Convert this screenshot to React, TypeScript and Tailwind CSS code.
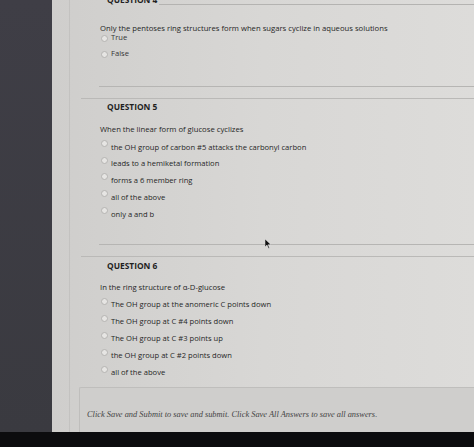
import React from "react";

function Radio() {
  return (
    <span className="w-[7px] h-[7px] rounded-full border border-[#b5b4b2] bg-[#e6e5e3] shrink-0 -translate-y-[4px] mr-[3px]" />
  );
}

function Option({ text, h = "h-[17px]" }: { text: string; h?: string }) {
  return (
    <div className={h + " flex items-center pl-[31px]"}>
      <Radio />
      <span className="block text-[7.6px] leading-none text-[#262626] whitespace-nowrap">{text}</span>
    </div>
  );
}

function Heading({ text, className = "" }: { text: string; className?: string }) {
  return (
    <div className={"h-[12px] flex items-center pl-[37px] " + className}>
      <span className="block text-[8.4px] font-bold leading-none text-[#1f1f1f] whitespace-nowrap">{text}</span>
    </div>
  );
}

function Stem({ text, className = "" }: { text: string; className?: string }) {
  return (
    <div className={"h-[10px] flex items-center pl-[30px] " + className}>
      <span className="block text-[7.7px] leading-none text-[#262626] whitespace-nowrap">{text}</span>
    </div>
  );
}

function Separator({ first, second }: { first: string; second: string }) {
  return (
    <>
      <div className={"h-px bg-[#b6b5b3] ml-[29px] " + first} />
      <div className={"h-px bg-[#bab9b7] ml-[11px] " + second} />
    </>
  );
}

export default function App() {
  return (
    <div className="w-[474px] h-[447px] overflow-hidden flex flex-col bg-[#0c0c0e] font-['Open_Sans',sans-serif] relative">
      <div className="flex h-[432px]">
        <div className="w-[52px] bg-gradient-to-b from-[#3f3e46] to-[#3a3a40]" />
        <div className="flex-1 flex bg-gradient-to-r from-[#cfcecc] via-[#d8d7d5] to-[#dddcda]">
          <div className="w-[18px] border-r border-[#c3c2c0]" />
          <div className="flex-1 flex flex-col">
            {/* Question 4 */}
            <div className="h-[12px] -mt-[6px] flex items-center pl-[37px]">
              <span className="block text-[8.4px] font-bold leading-none text-[#1f1f1f] whitespace-nowrap">QUESTION 4</span>
              <div className="flex-1 h-px bg-[#b4b3b1] ml-[2px] translate-y-[4px]" />
            </div>
            <Stem className="mt-[18px]" text="Only the pentoses ring structures form when sugars cyclize in aqueous solutions" />
            <div className="-mt-[4px] flex flex-col">
              <div className="h-[16px] flex items-center pl-[31px]">
                <span className="w-[7px] h-[7px] rounded-full border border-[#b5b4b2] bg-[#e6e5e3] shrink-0 mr-[3px]" />
                <span className="block text-[7.6px] leading-none text-[#363636]">True</span>
              </div>
              <div className="h-[16px] flex items-center pl-[31px]">
                <span className="w-[7px] h-[7px] rounded-full border border-[#b5b4b2] bg-[#e6e5e3] shrink-0 mr-[3px]" />
                <span className="block text-[7.6px] leading-none text-[#363636]">False</span>
              </div>
            </div>
            <Separator first="mt-[24px]" second="mt-[11px]" />

            {/* Question 5 */}
            <Heading className="mt-[2px]" text="QUESTION 5" />
            <Stem className="mt-[12px]" text="When the linear form of glucose cyclizes" />
            <div className="mt-[4px] flex flex-col">
              <Option h="h-[16.75px]" text="the OH group of carbon #5 attacks the carbonyl carbon" />
              <Option h="h-[16.75px]" text="leads to a hemiketal formation" />
              <Option h="h-[16.75px]" text="forms a 6 member ring" />
              <Option h="h-[16.75px]" text="all of the above" />
              <Option h="h-[16.75px]" text="only a and b" />
            </div>
            <Separator first="mt-[21px]" second="mt-[11px]" />

            {/* Question 6 */}
            <Heading className="mt-[3px]" text="QUESTION 6" />
            <Stem className="mt-[11px]" text="In the ring structure of α-D-glucose" />
            <div className="mt-[4px] flex flex-col">
              <Option text="The OH group at the anomeric C points down" />
              <Option text="The OH group at C #4 points down" />
              <Option text="The OH group at C #3 points up" />
              <Option text="the OH group at C #2 points down" />
              <Option text="all of the above" />
            </div>

            {/* Footer box */}
            <div className="mt-[5px] ml-[9px] flex-1 bg-[#cfcecc] border-t border-l border-[#bfbebc] rounded-tl-[2px] pt-[23px] pl-[7px]">
              <span className="font-['Liberation_Serif',serif] italic text-[8.4px] leading-none text-[#444] whitespace-nowrap block">
                Click Save and Submit to save and submit. Click Save All Answers to save all answers.
              </span>
            </div>
          </div>
        </div>
      </div>
      <div className="h-[15px] bg-[#0c0c0e]" />

      {/* mouse cursor */}
      <svg className="absolute left-[265px] top-[239px]" width="7" height="10" viewBox="0 0 7 10">
        <path d="M0 0 L0 8 L2 6 L3.5 9.5 L4.5 9 L3.2 5.7 L6 5.7 Z" fill="#111" stroke="#eee" strokeWidth="0.5" />
      </svg>
    </div>
  );
}
